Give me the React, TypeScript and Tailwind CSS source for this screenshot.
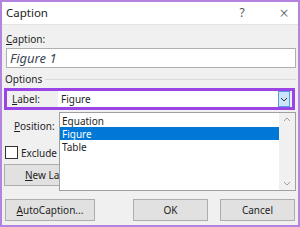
import React from 'react';

function Btn({ children, className = '' }: { children: React.ReactNode; className?: string }) {
	return (
		<div className={`h-[22px] flex items-center justify-center bg-[#e1e1e1] border border-[#adadad] ${className}`}>
			{children}
		</div>
	);
}

export default function App() {
	return (
		<div className="w-[300px] h-[227px] border-2 border-[#b284e0] bg-[#f0f0f0] flex flex-col overflow-hidden font-['Noto_Sans',sans-serif] text-[10px] text-[#1e1e1e] leading-none">
			{/* title bar */}
			<div className="h-[23px] shrink-0 bg-white flex items-center pl-[4px] border-b border-[#e3e3e3]">
				<span className="text-[11.5px] text-[#222]">Caption</span>
				<span className="ml-auto w-[24px] text-center text-[12px] text-[#555]">?</span>
				<span className="w-[20px] ml-[20px] mr-[4px] text-center text-[16px] font-light text-[#555]">×</span>
			</div>

			<div className="relative flex-1 flex flex-col pl-[2px] pr-[2px]">
				<div className="mt-[7px] h-[14px] flex items-center pl-[2px]">
					<span><u>C</u>aption:</span>
				</div>
				<div className="mt-[2px] ml-[2px] h-[20px] bg-white border border-[#b0b0b0] flex items-center pl-[3px]">
					<span className="italic text-[13px] text-[#3d4654]">Figure 1</span>
				</div>

				<div className="mt-[4px] h-[14px] flex items-center gap-[3px] pl-[1px]">
					<span>Options</span>
					<div className="flex-1 h-px bg-[#dadada]" />
				</div>

				{/* highlighted label row */}
				<div className="mt-[2px] mr-[1px] h-[22px] border-[3px] border-[#9b44e6] flex items-center">
					<span className="w-[51px] pl-[5px]"><u>L</u>abel:</span>
					<div className="flex-1 h-[16px] bg-white flex items-center pl-[3px] mr-[2px]">
						<span>Figure</span>
						<div className="ml-auto w-[12px] h-[16px] bg-[#cce4f7] border border-[#569de5] flex items-center justify-center">
							<svg width="8" height="5" viewBox="0 0 8 5" fill="none">
								<path d="M1 1l3 3 3-3" stroke="#333" strokeWidth="1" />
							</svg>
						</div>
					</div>
				</div>

				<div className="mt-[9px] h-[14px] flex items-center pl-[10px]">
					<span><u>P</u>osition:</span>
				</div>

				<div className="mt-[13px] h-[13px] flex items-center gap-[3px] pl-[1px]">
					<div className="w-[13px] h-[13px] bg-white border border-[#333] shrink-0" />
					<span className="w-[38px] overflow-hidden whitespace-nowrap">E<u>x</u>clude label from caption</span>
				</div>

				<div className="mt-[5px] w-[55px] h-[22px] flex items-center bg-[#e1e1e1] border border-r-0 border-[#adadad] overflow-hidden whitespace-nowrap pl-[20px]">
					<span><u>N</u>ew Label...</span>
				</div>

				<div className="mt-[13px] flex items-center">
					<Btn className="w-[90px] ml-[1px]">
						<span><u>A</u>utoCaption...</span>
					</Btn>
					<Btn className="w-[75px] ml-[38px]">
						<span>OK</span>
					</Btn>
					<Btn className="w-[75px] ml-[12px]">
						<span>Cancel</span>
					</Btn>
				</div>

				{/* dropdown list */}
				<div className="absolute left-[57px] top-[87px] w-[237px] h-[79px] bg-white border border-[#a0a0a0] flex">
					<div className="flex-1 flex flex-col pt-[1px]">
						<div className="h-[13px] flex items-center pl-[2px]">Equation</div>
						<div className="h-[13px] flex items-center pl-[2px] bg-[#0078d7] text-white">Figure</div>
						<div className="h-[13px] flex items-center pl-[2px]">Table</div>
					</div>
					<div className="w-[16px] bg-[#f0f0f0] flex flex-col items-center justify-between py-[4px]">
						<svg width="8" height="5" viewBox="0 0 8 5" fill="none">
							<path d="M1 4l3-3 3 3" stroke="#a0a0a0" strokeWidth="1" />
						</svg>
						<svg width="8" height="5" viewBox="0 0 8 5" fill="none">
							<path d="M1 1l3 3 3-3" stroke="#a0a0a0" strokeWidth="1" />
						</svg>
					</div>
				</div>
			</div>
		</div>
	);
}
